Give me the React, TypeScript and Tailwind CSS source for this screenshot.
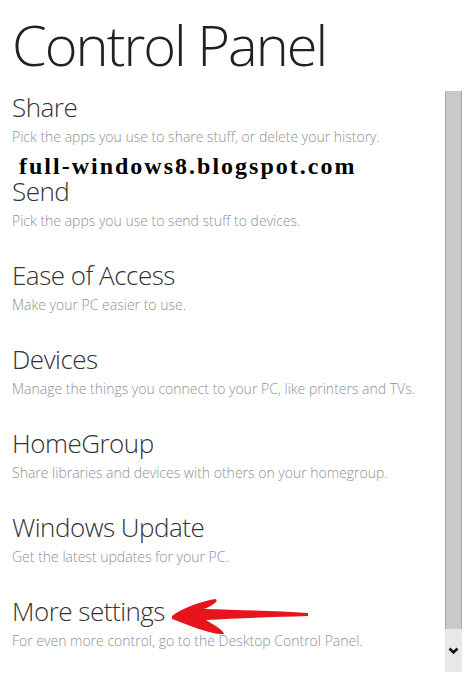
const items = [
  { title: "Share", desc: "Pick the apps you use to share stuff, or delete your history." },
  { title: "Send", desc: "Pick the apps you use to send stuff to devices." },
  { title: "Ease of Access", desc: "Make your PC easier to use." },
  { title: "Devices", desc: "Manage the things you connect to your PC, like printers and TVs." },
  { title: "HomeGroup", desc: "Share libraries and devices with others on your homegroup." },
  { title: "Windows Update", desc: "Get the latest updates for your PC." },
  { title: "More settings", desc: "For even more control, go to the Desktop Control Panel." },
];

function Arrow() {
  return (
    <svg
      className="absolute left-[168px] top-[596px]"
      width="142"
      height="44"
      viewBox="0 0 142 44"
    >
      <path
        d="M4 20 C 14 12, 34 5, 47 3 C 51 4, 48 8, 36 13 C 70 14, 110 15, 140 17 L 140 20 C 110 21, 70 22, 38 24 C 48 30, 55 34, 56 38 C 44 39, 20 29, 4 23 Z"
        fill="#e8141b"
      />
    </svg>
  );
}

function Scrollbar() {
  return (
    <div className="mt-[91px] flex h-[581px] w-[17px] flex-col">
      <div className="h-[538px] border-x border-[#a9a9a9] bg-[#c9c9c9]" />
      <div className="flex flex-1 items-center justify-center bg-[#e8e8e8]">
        <svg width="11" height="8" viewBox="0 0 11 8">
          <path d="M1.5 1.5 L5.5 5.5 L9.5 1.5" stroke="#111" strokeWidth="2.6" fill="none" />
        </svg>
      </div>
    </div>
  );
}

export default function App() {
  return (
    <div className="relative flex h-[676px] w-[468px] overflow-hidden bg-white font-['Open_Sans',sans-serif]">
      <div className="flex-1 pl-[12px]">
        <h1 className="pt-[6px] text-[56px] leading-[76px] font-light tracking-[-2px] text-[#222]">
          Control Panel
        </h1>
        <ul className="mt-[8px]">
          {items.map((item) => (
            <li key={item.title} className="h-[84px]">
              <div className="text-[26px] leading-[34px] font-light tracking-[-0.5px] text-[#333]">
                {item.title}
              </div>
              <div className="mt-[4px] text-[14px] leading-[18px] font-light text-[#909090]">
                {item.desc}
              </div>
            </li>
          ))}
        </ul>
      </div>
      <div className="mr-[6px]">
        <Scrollbar />
      </div>
      <div className="absolute left-[19px] top-[152px] font-['Liberation_Serif',serif] text-[24px] leading-[28px] font-bold tracking-[2px] text-black">
        full-windows8.blogspot.com
      </div>
      <Arrow />
    </div>
  );
}
